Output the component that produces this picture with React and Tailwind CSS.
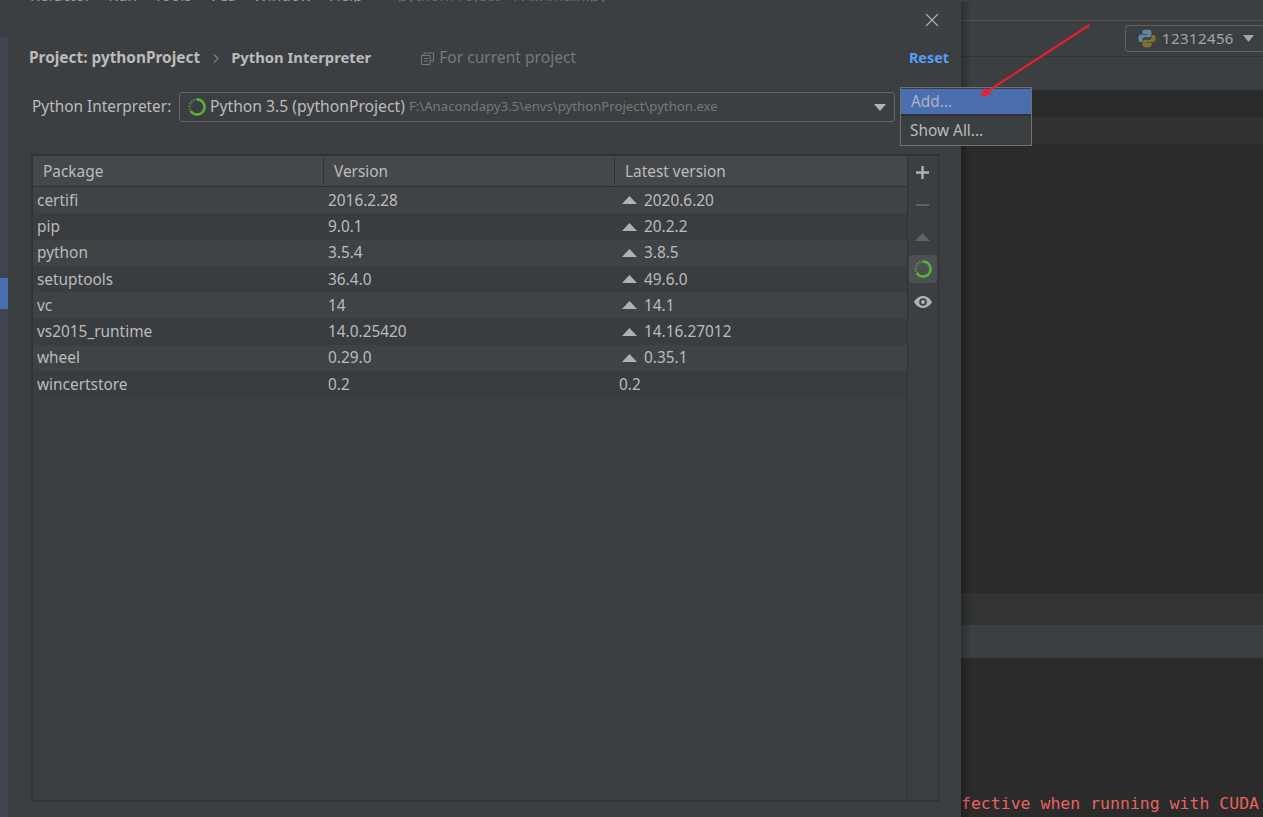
import React from 'react';

const packages = [
  { name: 'certifi', version: '2016.2.28', latest: '2020.6.20', update: true },
  { name: 'pip', version: '9.0.1', latest: '20.2.2', update: true },
  { name: 'python', version: '3.5.4', latest: '3.8.5', update: true },
  { name: 'setuptools', version: '36.4.0', latest: '49.6.0', update: true },
  { name: 'vc', version: '14', latest: '14.1', update: true },
  { name: 'vs2015_runtime', version: '14.0.25420', latest: '14.16.27012', update: true },
  { name: 'wheel', version: '0.29.0', latest: '0.35.1', update: true },
  { name: 'wincertstore', version: '0.2', latest: '0.2', update: false },
];

const Spinner = ({ size = 18 }) => (
  <svg width={size} height={size} viewBox="0 0 18 18" fill="none" className="shrink-0">
    <path d="M9 1.500a7.500 7.500 0 1 1-6.200 11.700" stroke="#5cb338" strokeWidth="2.400" />
    <circle cx="9" cy="9" r="7.500" stroke="#5cb338" strokeWidth="2.200" strokeDasharray="1.200 1.400" opacity="0.8" />
  </svg>
);

const Caret = ({ w = 14, h = 8, color = '#afb1b3' }) => (
  <svg width={w} height={h} viewBox="0 0 14 8" className="shrink-0" preserveAspectRatio="none">
    <path d="M0 0h14L7 8z" fill={color} />
  </svg>
);

const UpTriangle = ({ color = '#afb1b3' }) => (
  <svg width="15" height="8" viewBox="0 0 15 8" className="shrink-0">
    <path d="M7.500 0 15 8H0z" fill={color} />
  </svg>
);

const PythonLogo = () => (
  <svg width="18" height="19" viewBox="0 0 18 19" className="shrink-0">
    <path d="M9 0.500c-3 0-4.600.8-4.600 2.400V5h4.800v.8H2.600C1 5.800.3 7.300.3 9.400s.8 3.700 2.300 3.700h1.800v-2.300c0-1.500 1.200-2.600 2.700-2.600h4.200c1.200 0 2.100-1 2.100-2.200V2.900C13.400 1.300 12 .5 9 .5z" fill="#5f87a3" />
    <path d="M9 18.500c3 0 4.600-.8 4.600-2.400V14H8.800v-.8h6.600c1.600 0 2.300-1.500 2.300-3.600s-.8-3.700-2.300-3.700h-1.800v2.300c0 1.500-1.200 2.600-2.700 2.600H6.700c-1.200 0-2.100 1-2.100 2.200v3.100c0 1.600 1.400 2.400 4.400 2.400z" fill="#80702f" />
  </svg>
);

const PackageRow = ({ pkg, index }) => (
  <div className={`grid grid-cols-[291px_291px_1fr] h-[26.25px] pt-[0.5px] items-center text-[15.4px] text-[#bbbbbb] ${index % 2 === 0 ? 'bg-[#404345]' : 'bg-[#3a3d3f]'}`}>
    <div className="pl-1">{pkg.name}</div>
    <div className="pl-[4px]">{pkg.version}</div>
    {pkg.update ? (
      <div className="flex items-center pl-[7px] gap-[7px]">
        <UpTriangle />
        <span>{pkg.latest}</span>
      </div>
    ) : (
      <div className="pl-[4px]">{pkg.latest}</div>
    )}
  </div>
);

const App = () => {
  return (
    <div className="relative h-[817px] w-[1263px] overflow-hidden flex flex-col bg-[#3c3f41] font-['Noto_Sans',sans-serif]">
      {/* menu bar, nearly all hidden behind the dialog */}
      <div className="h-[2px] overflow-hidden shrink-0">
        <div className="flex -mt-[13px] pl-[30px] gap-[17px] text-[15.5px] leading-[16px] text-[#9a9c9e] whitespace-nowrap">
          <span>Refactor</span>
          <span>Run</span>
          <span>Tools</span>
          <span>VCS</span>
          <span>Window</span>
          <span>Help</span>
          <span className="ml-[18px] text-[#6a6c6e]">pythonProject - F:\...\main.py</span>
        </div>
      </div>

      <div className="flex flex-1 min-h-0">
        {/* settings dialog */}
        <div className="w-[961px] shrink-0 flex flex-col bg-[#3c3f41] z-10">
          <div className="h-[35px] shrink-0 flex justify-end items-center pr-[22px]">
            <svg width="14" height="14" viewBox="0 0 14 14" stroke="#a9abad" strokeWidth="1.300" fill="none">
              <path d="M1 1l12 12M13 1 1 13" />
            </svg>
          </div>

          <div className="flex flex-1 min-h-0">
            <div className="w-2 shrink-0 bg-[#3f444e] flex flex-col">
              <div className="h-[241px]" />
              <div className="h-[31px] bg-[#4b6eaf]" />
            </div>

            <div className="flex-1 min-w-0 flex flex-col pl-[21px] pr-[12px] pb-[15px]">
              {/* breadcrumb */}
              <div className="h-[42px] shrink-0 flex items-center text-[15.4px] text-[#bbbbbb]">
                <span className="font-bold">Project: pythonProject</span>
                <svg width="6" height="9" viewBox="0 0 6 9" fill="none" stroke="#b0b2b4" strokeWidth="1" className="ml-[13px] mr-[12px]">
                  <path d="M1 .5l4 4-4 4" />
                </svg>
                <span className="font-bold text-[14.8px] mb-[1px]">Python Interpreter</span>
                <svg width="13" height="13" viewBox="0 0 13 13" fill="none" stroke="#787878" strokeWidth="1" className="ml-[50px] mr-[5px]">
                  <path d="M3 3V1h7M.5 3.500h8.500v9H.5zM3 6.500h4M3 9h4" />
                  <path d="M10 1h2.500v8H9" />
                </svg>
                <span className="text-[15.6px] text-[#787878]">For current project</span>
                <span className="ml-auto font-bold text-[14.4px] text-[#589df6]">Reset</span>
              </div>

              {/* interpreter combo */}
              <div className="mt-[13px] h-[30px] shrink-0 flex items-center text-[15.4px] text-[#bbbbbb]">
                <span className="ml-[3px] mb-[1px] w-[147px] whitespace-nowrap">Python Interpreter:</span>
                <div className="w-[716px] h-[30px] shrink-0 border border-[#646464] rounded-[3px] flex items-center pl-[8px] pr-[8px] bg-[#3c3f41]">
                  <Spinner />
                  <span className="ml-[4px] mb-[1px] text-[15.7px] whitespace-nowrap">Python 3.5 (pythonProject)</span>
                  <span className="ml-[4px] mb-[1px] text-[13.2px] text-[#787878] whitespace-nowrap">F:\Anacondapy3.5\envs\pythonProject\python.exe</span>
                  <span className="ml-auto">
                    <Caret w={12} h={7} />
                  </span>
                </div>
              </div>

              {/* package table */}
              <div className="mt-[32px] ml-[2px] mr-[10px] flex-1 min-h-0 flex border-l-2 border-t-2 border-b-2 border-r border-[#323232]">
                <div className="flex-1 min-w-0 flex flex-col">
                  <div className="h-[31px] shrink-0 grid grid-cols-[291px_291px_1fr] items-center bg-[#45484a] border-b border-[#323232] text-[15.4px] text-[#bbbbbb]">
                    <div className="pl-[10px] pt-[1px] h-[27px] flex items-center border-r border-[#323232]">Package</div>
                    <div className="pl-[10px] pt-[1px] h-[27px] flex items-center border-r border-[#323232]">Version</div>
                    <div className="pl-[10px] pt-[1px] h-[27px] flex items-center">Latest version</div>
                  </div>
                  <div className="flex-1 bg-[#3c3f41]">
                    {packages.map((pkg, i) => (
                      <PackageRow key={pkg.name} pkg={pkg} index={i} />
                    ))}
                  </div>
                </div>

                {/* side toolbar */}
                <div className="w-[31px] shrink-0 border-l border-[#323232] flex flex-col items-center pt-[2px]">
                  <div className="h-[28px] mr-[1px] flex items-center justify-center">
                    <svg width="13" height="13" viewBox="0 0 13 13" fill="#afb1b3">
                      <path d="M5.300 0h2.400v5.300H13v2.400H7.700V13H5.300V7.700H0V5.300h5.300z" />
                    </svg>
                  </div>
                  <div className="mt-[5px] mr-[1px] h-[28px] flex items-center justify-center">
                    <div className="w-[13px] h-[2px] bg-[#5f6162]" />
                  </div>
                  <div className="mt-[4px] mr-[1px] h-[28px] flex items-center justify-center">
                    <UpTriangle color="#5f6162" />
                  </div>
                  <div className="mt-[4px] w-[28px] h-[28px] rounded-[3px] bg-[#4c5052] flex items-center justify-center">
                    <Spinner />
                  </div>
                  <div className="mt-[5px] h-[28px] flex items-center justify-center">
                    <svg width="18" height="12" viewBox="0 0 18 12">
                      <path fillRule="evenodd" d="M9 0c3.800 0 7 2.400 9 6-2 3.600-5.200 6-9 6s-7-2.400-9-6c2-3.600 5.200-6 9-6zm0 2.200a3.800 3.800 0 1 0 0 7.600 3.800 3.800 0 0 0 0-7.600zm0 1.800a2 2 0 1 1 0 4 2 2 0 0 1 0-4z" fill="#afb1b3" />
                    </svg>
                  </div>
                </div>
              </div>
            </div>
          </div>
        </div>

        {/* IDE behind the dialog */}
        <div className="relative flex-1 min-w-0 flex flex-col">
          <div className="h-[19px] shrink-0 border-b border-[#515151]" />
          <div className="h-[36px] shrink-0 border-b border-[#323232] flex items-center justify-end">
            <div className="w-[138px] h-[27px] border border-r-0 border-[#5e6060] rounded-l-[4px] flex items-center pl-[12px] text-[15px] tracking-[0.4px] text-[#a4a6a8]">
              <PythonLogo />
              <span className="ml-[6px]">12312456</span>
              <span className="ml-[9px]">
                <Caret w={11} h={7} color="#a4a6a8" />
              </span>
            </div>
          </div>
          <div className="h-[33px] shrink-0" />
          <div className="h-[27px] shrink-0 bg-[#2b2b2b]" />
          <div className="h-[27px] shrink-0 bg-[#323232]" />
          <div className="h-[451px] shrink-0 bg-[#2b2b2b] border-b border-[#3a3a3a]" />
          <div className="h-[30px] shrink-0 bg-[#313335]" />
          <div className="h-[33px] shrink-0 bg-[#3b3f42]" />
          <div className="flex-1 min-h-0 bg-[#2b2b2b] flex flex-col justify-end pb-[1px] overflow-hidden">
            <div className="text-[16.5px] leading-[24px] whitespace-nowrap text-[#e8635f] font-['DejaVu_Sans_Mono',monospace]">
              fective when running with CUDA
            </div>
          </div>
          {/* dialog shadow */}
          <div className="absolute left-0 top-0 bottom-0 w-[10px] bg-gradient-to-r from-[#00000040] to-transparent" />
        </div>
      </div>

      {/* Add popup */}
      <div className="absolute left-[900px] top-[87px] w-[132px] h-[59px] z-20 border border-[#6f7173] bg-[#3c3f41] text-[15.4px] flex flex-col">
        <div className="h-[26px] shrink-0 bg-[#4b6eaf] border-t border-[#3c3f41] flex items-center pl-[10px] text-[#aab4c4]">Add...</div>
        <div className="h-[2px] shrink-0 bg-[#323232]" />
        <div className="flex-1 flex items-center pl-[9px] text-[#bbbbbb]">Show All...</div>
      </div>

      {/* red annotation arrow */}
      <svg className="absolute left-[970px] top-[15px] z-30" width="130" height="90" viewBox="0 0 130 90" fill="none">
        <path d="M119.500 10 18 76" stroke="#e8202a" strokeWidth="2.200" />
        <path d="M10 82 14.500 73 22 79z" fill="#e8202a" />
      </svg>
    </div>
  );
};

export default App;
